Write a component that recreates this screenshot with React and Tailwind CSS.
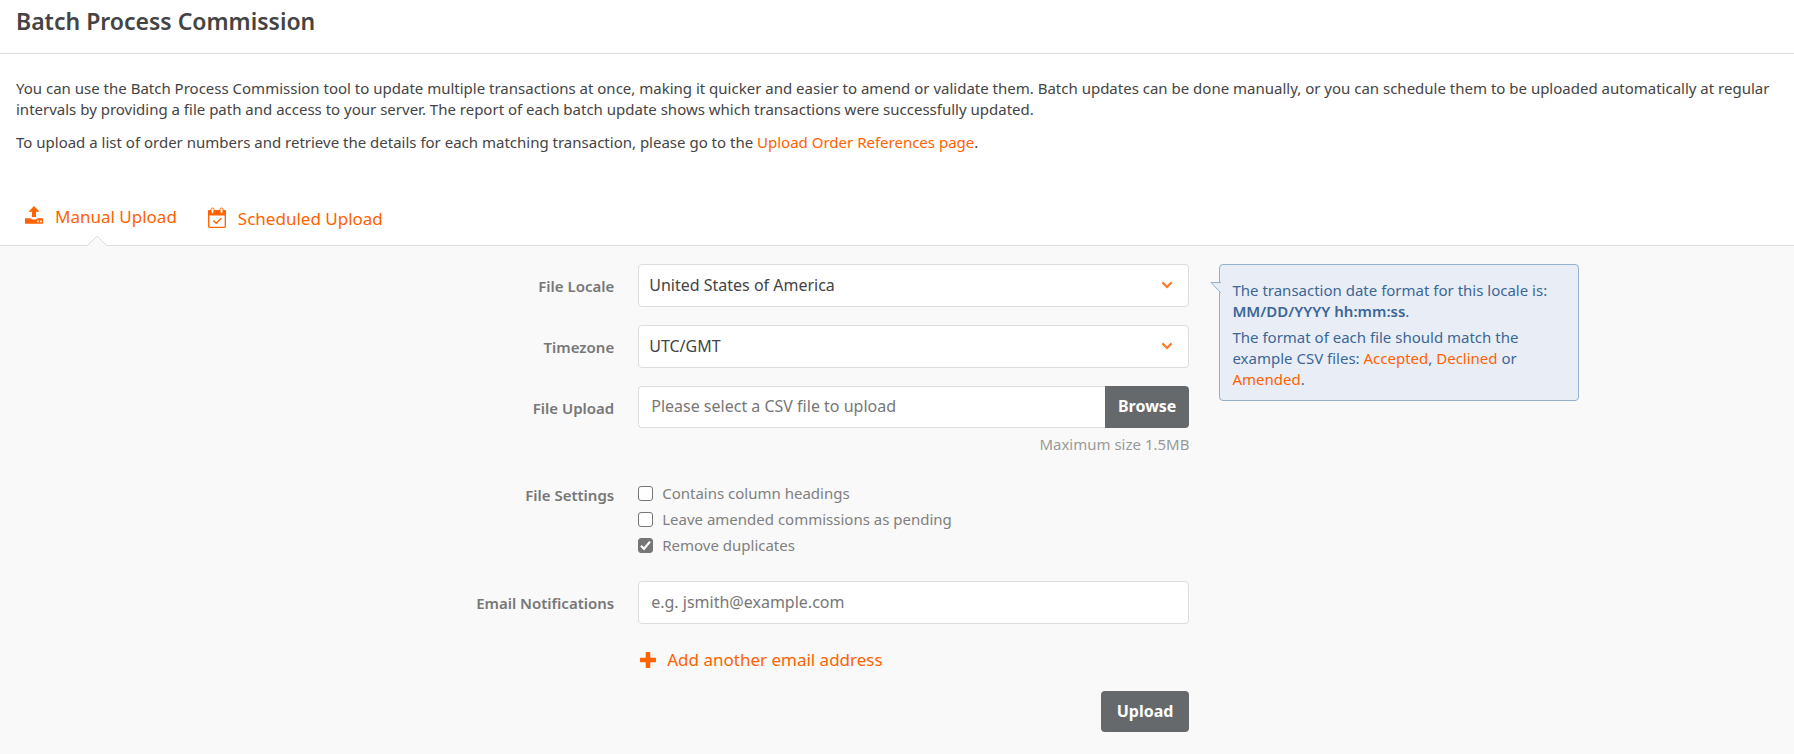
import React from "react";

const linkClass = "text-[#ff6200] hover:underline";
const fieldClass =
  "block w-full rounded border border-[#ddd] bg-white pb-0.5 text-base outline-none focus:border-[#94b0ce]";

function UploadIcon() {
  return (
    <svg viewBox="0 0 20 20" className="h-5 w-5 shrink-0" fill="currentColor" aria-hidden="true">
      <path d="M10 1 15.6 6.8H12V12H8V6.8H4.4Z" />
      <path
        fillRule="evenodd"
        d="M1.6 13.2H6.6C6.9 14.3 7.8 14.6 10 14.6S13.1 14.3 13.4 13.2H18.4Q19 13.2 19 13.8V18.2Q19 18.8 18.4 18.8H1.6Q1 18.8 1 18.2V13.8Q1 13.2 1.6 13.2ZM13.2 15.6V17.2H14.8V15.6ZM16.2 15.6V17.2H17.8V15.6Z"
      />
    </svg>
  );
}

function CalendarIcon() {
  return (
    <svg viewBox="0 0 20 22" className="h-[22px] w-5 shrink-0" aria-hidden="true">
      <rect x="1.7" y="4" width="16.6" height="16.3" rx="0.8" fill="none" stroke="currentColor" strokeWidth="1.3" />
      <path d="M1 4.2Q1 3 2.2 3H17.8Q19 3 19 4.2V8.6H1Z" fill="currentColor" />
      <rect x="4" y="1" width="3" height="5.4" rx="1.4" fill="#fff" stroke="currentColor" strokeWidth="1" />
      <rect x="13" y="1" width="3" height="5.4" rx="1.4" fill="#fff" stroke="currentColor" strokeWidth="1" />
      <path d="M6.2 13.4 9.2 16.2 14.2 11.2" fill="none" stroke="currentColor" strokeWidth="1.4" />
    </svg>
  );
}

function PlusIcon() {
  return (
    <svg viewBox="0 0 16 16" className="h-4 w-4 shrink-0" fill="currentColor" aria-hidden="true">
      <path d="M6.6 0H9.4Q10.3 0 10.3 .9V5.7H15.1Q16 5.7 16 6.6V9.4Q16 10.3 15.1 10.3H10.3V15.1Q10.3 16 9.4 16H6.6Q5.7 16 5.7 15.1V10.3H.9Q0 10.3 0 9.4V6.6Q0 5.7 .9 5.7H5.7V.9Q5.7 0 6.6 0Z" />
    </svg>
  );
}

function Row({ label, htmlFor, children }) {
  const labelClass = "pt-[11px] text-right text-[15px] leading-[22px] font-semibold text-[#777]";
  return (
    <div className="grid grid-cols-[614fr_551fr] gap-6">
      {htmlFor ? (
        <label htmlFor={htmlFor} className={labelClass}>
          {label}
        </label>
      ) : (
        <span id="file-settings" className={labelClass}>
          {label}
        </span>
      )}
      <div>{children}</div>
    </div>
  );
}

function Select({ id, options }) {
  return (
    <div className="relative">
      <select id={id} className={`${fieldClass} h-[43px] appearance-none pr-10 pl-[10px] text-[#444]`}>
        {options.map((option) => (
          <option key={option}>{option}</option>
        ))}
      </select>
      <svg
        viewBox="0 0 12 8"
        className="pointer-events-none absolute top-[17px] right-4 h-2 w-3 text-[#ff7a26]"
        fill="none"
        stroke="currentColor"
        strokeWidth="2.2"
        aria-hidden="true"
      >
        <path d="M1.4 1.4 6 6 10.6 1.4" />
      </svg>
    </div>
  );
}

const settings = [
  { id: "headings", text: "Contains column headings", on: false },
  { id: "pending", text: "Leave amended commissions as pending", on: false },
  { id: "duplicates", text: "Remove duplicates", on: true },
];

function Setting({ id, text, on }) {
  return (
    <label htmlFor={id} className="flex h-[26px] items-center gap-[9px] text-[15px] text-[#808080]">
      <span className="relative flex">
        <input
          id={id}
          type="checkbox"
          defaultChecked={on}
          className="peer h-[15px] w-[15px] appearance-none rounded-[3px] border border-[#767676] bg-white checked:bg-[#767676]"
        />
        <svg
          viewBox="0 0 15 15"
          className="pointer-events-none absolute inset-0 hidden h-[15px] w-[15px] peer-checked:block"
          fill="none"
          stroke="#fff"
          strokeWidth="2.2"
          aria-hidden="true"
        >
          <path d="M3 7.8 6 10.8 12 3.6" />
        </svg>
      </span>
      {text}
    </label>
  );
}

export default function App() {
  return (
    <div className="flex min-h-screen flex-col bg-white font-['Noto_Sans',sans-serif] text-[#444]">
      <header className="border-b border-[#ddd] px-4 pt-[5px] pb-4">
        <h1 className="text-[23px] leading-8 font-semibold">Batch Process Commission</h1>
      </header>

      <div className="flex flex-col gap-3 px-4 pt-6 text-[15px] leading-[21px]">
        <p>
          You can use the Batch Process Commission tool to update multiple transactions at once, making it quicker and
          easier to amend or validate them. Batch updates can be done manually, or you can schedule them to be uploaded
          automatically at regular intervals by providing a file path and access to your server. The report of each
          batch update shows which transactions were successfully updated.
        </p>
        <p>
          To upload a list of order numbers and retrieve the details for each matching transaction, please go to the{" "}
          <a href="#references" className={linkClass}>
            Upload Order References page
          </a>
          .
        </p>
      </div>

      <nav className="mt-[52px] flex gap-[30px] px-6 text-[17px] leading-6 text-[#ff6200]">
        <a href="#manual" aria-current="page" className="relative flex h-10 items-start gap-[11px]">
          <UploadIcon />
          Manual Upload
          <svg viewBox="0 0 20 11" className="absolute -bottom-px left-[63px] h-[11px] w-5" aria-hidden="true">
            <path d="M0.5 10.5 10 1 19.5 10.5V11H.5Z" fill="#f9f9f9" />
            <path d="M0.5 10.5 10 1 19.5 10.5" fill="none" stroke="#ddd" />
          </svg>
        </a>
        <a href="#scheduled" className="flex items-start gap-[11px] pt-0.5">
          <CalendarIcon />
          Scheduled Upload
        </a>
      </nav>

      <main className="flex grow items-start border-t border-[#ddd] bg-[#f9f9f9] pt-[18px] pb-[22px]">
        <form className="w-[66.3%]" onSubmit={(event) => event.preventDefault()}>
          <div className="flex flex-col gap-[18px]">
            <Row label="File Locale" htmlFor="locale">
              <Select id="locale" options={["United States of America", "United Kingdom"]} />
            </Row>
            <Row label="Timezone" htmlFor="timezone">
              <Select id="timezone" options={["UTC/GMT", "Europe/London"]} />
            </Row>
            <Row label="File Upload" htmlFor="file">
              <div className="flex">
                <input
                  id="file"
                  type="text"
                  readOnly
                  placeholder="Please select a CSV file to upload"
                  className={`${fieldClass} h-[42px] rounded-r-none border-r-0 px-3 placeholder:text-[#777]`}
                />
                <button type="button" className="rounded-r bg-[#65696c] px-[13px] pb-0.5 text-base font-bold text-white">
                  Browse
                </button>
              </div>
              <p className="pt-[5px] text-right text-[15px] leading-[22px] text-[#999]">Maximum size 1.5MB</p>
            </Row>
            <Row label="File Settings">
              <div role="group" aria-labelledby="file-settings" className="pt-[7px] pb-[5px]">
                {settings.map((setting) => (
                  <Setting key={setting.id} {...setting} />
                ))}
              </div>
            </Row>
            <Row label="Email Notifications" htmlFor="email">
              <input
                id="email"
                type="email"
                placeholder="e.g. jsmith@example.com"
                className={`${fieldClass} h-[43px] px-3 placeholder:text-[#777]`}
              />
              <button
                type="button"
                className="mt-6 ml-0.5 flex items-center gap-[11px] text-[17px] leading-6 text-[#ff6200]"
              >
                <PlusIcon />
                Add another email address
              </button>
            </Row>
          </div>
          <div className="flex justify-end pt-[19px]">
            <button type="submit" className="h-[41px] rounded bg-[#65696c] px-4 pb-0.5 text-base font-bold text-white">
              Upload
            </button>
          </div>
        </form>

        <aside className="relative ml-[30px] flex w-[360px] flex-col gap-[5px] rounded border border-[#94b0ce] bg-[#e9eef6] px-3 pt-[15px] pb-[10px] text-[15px] leading-[21px] text-[#3c6696]">
          <svg viewBox="0 0 11 13" className="absolute top-[16px] -left-[10px] h-[13px] w-[11px]" aria-hidden="true">
            <path d="M1 1.5H11V12Z" fill="#e9eef6" />
            <path d="M11 1.5H1L10.5 11.5" fill="none" stroke="#94b0ce" />
          </svg>
          <p>
            The transaction date format for this locale is:{" "}
            <strong className="font-semibold">MM/DD/YYYY hh:mm:ss</strong>.
          </p>
          <p>
            The format of each file should match the example CSV files:{" "}
            <a href="#accepted" className={linkClass}>
              Accepted
            </a>
            ,{" "}
            <a href="#declined" className={linkClass}>
              Declined
            </a>{" "}
            or{" "}
            <a href="#amended" className={linkClass}>
              Amended
            </a>
            .
          </p>
        </aside>
      </main>
    </div>
  );
}
